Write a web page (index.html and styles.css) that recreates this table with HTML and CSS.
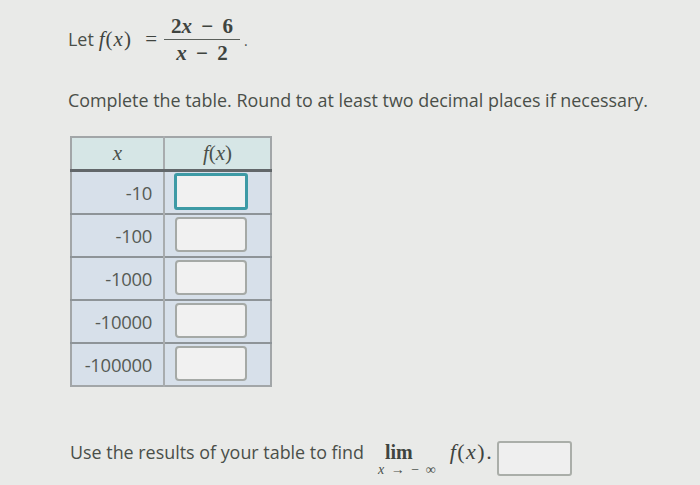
FILE: index.html
```html
<!DOCTYPE html>
<html>
<head>
<meta charset="utf-8">
<link rel="stylesheet" href="styles.css">
</head>
<body>
<div class="page">
  <div class="def">
    <span class="txt">Let</span>
    <span class="math eq"><i>f</i>(<i>x</i>) =</span>
    <span class="frac">
      <span class="num">2<i>x</i> − 6</span>
      <span class="den"><i>x</i> − 2</span>
    </span>
    <span class="dot">.</span>
  </div>
  <p class="instr">Complete the table. Round to at least two decimal places if necessary.</p>
  <table class="tbl">
    <thead>
      <tr><th class="cx"><i>x</i></th><th class="cf"><i>f</i>(<i>x</i>)</th></tr>
    </thead>
    <tbody>
      <tr><td class="val">-10</td><td class="in"><span class="box focus"></span></td></tr>
      <tr><td class="val">-100</td><td class="in"><span class="box"></span></td></tr>
      <tr><td class="val">-1000</td><td class="in"><span class="box"></span></td></tr>
      <tr><td class="val">-10000</td><td class="in"><span class="box"></span></td></tr>
      <tr><td class="val">-100000</td><td class="in"><span class="box"></span></td></tr>
    </tbody>
  </table>
  <div class="limrow">
    <span class="txt">Use the results of your table to find</span>
    <span class="lim">
      <span class="limw">lim</span>
      <span class="limsub"><i>x</i> → − ∞</span>
    </span>
    <span class="math fx"><i>f</i>(<i>x</i>).</span>
    <span class="ans"></span>
  </div>
</div>
</body>
</html>
```
FILE: styles.css
```css
html, body {
  margin: 0;
  padding: 0;
  background: #e9eae8;
}
.page {
  width: 700px;
  height: 485px;
  box-sizing: border-box;
  padding: 14px 0 0 68px;
  color: #4a4f49;
  font-family: "Open Sans", "DejaVu Sans", sans-serif;
  overflow: hidden;
}
.txt {
  font-size: 17.9px;
}
.math {
  font-family: "Liberation Serif", "DejaVu Serif", serif;
  font-size: 21px;
  color: #3f443f;
}
.eq {
  margin-left: 5px;
  letter-spacing: 1px;
  word-spacing: 7px;
}
.def {
  display: flex;
  align-items: center;
  height: 50px;
}
.frac {
  display: inline-flex;
  flex-direction: column;
  align-items: center;
  font-family: "Liberation Serif", "DejaVu Serif", serif;
  font-size: 21px;
  font-weight: bold;
  line-height: 20px;
  color: #3f443f;
  margin-left: 6px;
  word-spacing: 4px;
}
.num {
  padding: 0 7px 3px;
  border-bottom: 1.5px solid #5a5f5a;
}
.den {
  padding-top: 3px;
}
.dot {
  align-self: flex-end;
  margin-bottom: 14px;
  margin-left: 4px;
  font-size: 14px;
}
.instr {
  margin: 24px 0 0 0;
  font-size: 17.9px;
  line-height: 24px;
}
.tbl {
  margin-top: 24px;
  margin-left: 2px;
  border-collapse: collapse;
  border: 2px solid #a2a6a8;
}
.tbl th {
  background: #d6e6e6;
  height: 31px;
  padding: 0;
  font-family: "Liberation Serif", "DejaVu Serif", serif;
  font-weight: normal;
  font-size: 21px;
  color: #4a504a;
  border-bottom: 3px solid #62676a;
}
.cx { width: 91px; border-right: 2px solid #a8acae; }
.cf { width: 105px; }
.tbl td {
  background: #d7e0ea;
  height: 41px;
  padding: 0;
  border-top: 2px solid #8e9498;
}
.tbl tbody tr:first-child td { border-top: none; }
.val {
  text-align: right;
  padding-right: 11px !important;
  font-size: 18.5px;
  letter-spacing: -0.3px;
  border-right: 2px solid #a8acae;
  color: #565b55;
}
.in {
  padding-left: 10px !important;
}
.box {
  display: block;
  width: 72px;
  height: 35px;
  box-sizing: border-box;
  border: 2px solid #a5a9a6;
  border-radius: 4px;
  background: #f1f1f1;
  margin-top: -3px;
}
.box.focus {
  border: 3px solid #3d9aa5;
  width: 74px;
  height: 37px;
  margin-left: -1px;
  margin-top: -2px;
  border-radius: 3px;
}
.limrow {
  display: flex;
  align-items: baseline;
  margin-top: 52px;
  margin-left: 2px;
}
.lim {
  display: inline-flex;
  flex-direction: column;
  align-items: center;
  margin-left: 14px;
  font-family: "Liberation Serif", "DejaVu Serif", serif;
}
.limw {
  font-size: 20px;
  font-weight: bold;
  line-height: 19px;
  color: #3f443f;
  margin-right: 16px;
}
.limsub {
  font-size: 14px;
  line-height: 16px;
  color: #4a504a;
  word-spacing: 3px;
}
.fx {
  margin-left: 14px;
  font-size: 22px;
  letter-spacing: 1.5px;
}
.ans {
  align-self: center;
  display: inline-block;
  width: 75px;
  height: 35px;
  box-sizing: border-box;
  border: 2px solid #aaaea9;
  border-radius: 3px;
  background: #efefef;
  margin-left: 4px;
}
```
